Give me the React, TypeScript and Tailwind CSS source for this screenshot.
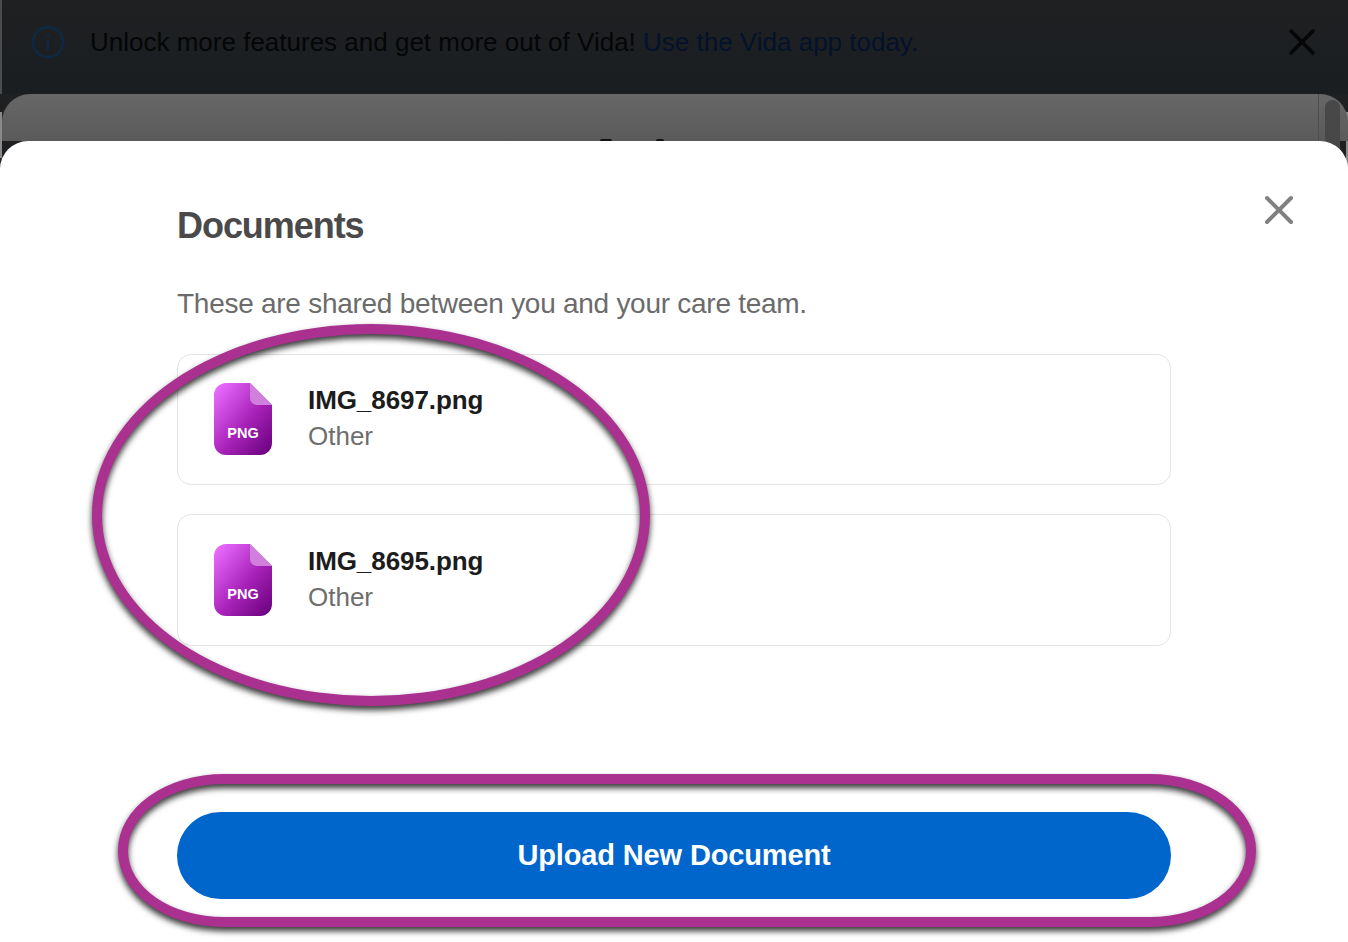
import { X } from "lucide-react";

const FONT = "font-['Liberation_Sans',Arial,sans-serif]";

const documents = [
  { name: "IMG_8697.png", kind: "Other", card: "h-[131px] pb-[1px]" },
  { name: "IMG_8695.png", kind: "Other", card: "h-[132px]" },
];

function PngIcon({ id }: { id: string }) {
  return (
    <svg width="58" height="72" viewBox="0 0 58 72" className="shrink-0">
      <defs>
        <linearGradient id={id} x1="0" y1="0" x2="1" y2="1">
          <stop offset="0.05" stopColor="#e96cff" />
          <stop offset="0.55" stopColor="#a822b8" />
          <stop offset="1" stopColor="#66007a" />
        </linearGradient>
      </defs>
      <path
        d="M12 0H36L58 22V60A12 12 0 0 1 46 72H12A12 12 0 0 1 0 60V12A12 12 0 0 1 12 0Z"
        fill={`url(#${id})`}
      />
      <path d="M36 0L58 22H43A7 7 0 0 1 36 15Z" fill="#d17fdc" />
      <text x="29" y="55" textAnchor="middle" fontFamily="Liberation Sans, Arial, sans-serif" fontWeight="700" fontSize="14.5" fill="#fff">
        PNG
      </text>
    </svg>
  );
}

function InfoIcon() {
  return (
    <svg width="34" height="34" viewBox="0 0 34 34" fill="none" className="shrink-0">
      <circle cx="17" cy="17" r="15" stroke="#0c2a45" strokeWidth="2.4" />
      <circle cx="17" cy="10.5" r="1.6" fill="#0c2a45" />
      <path d="M17 15V25" stroke="#0c2a45" strokeWidth="2.6" />
    </svg>
  );
}

export default function App() {
  return (
    <div className={`relative h-[942px] w-[1348px] overflow-hidden bg-[#1f2022] ${FONT}`}>
      {/* Banner, dimmed by the modal */}
      <div className="flex h-[94px] items-center border-l-2 border-[#4c4c4c] bg-gradient-to-b from-[#1f2022] to-[#1a1e21] pb-[10px] pl-[29px] pr-[24px]">
        <InfoIcon />
        <p className="ml-[25px] flex-1 text-[26px] text-[#050607]">
          Unlock more features and get more out of Vida! <span className="text-[#04122b]">Use the Vida app today.</span>
        </p>
        <X className="h-[44px] w-[44px] text-[#050607]" strokeWidth={1.9} />
      </div>

      {/* Slivers of the page at the window edges */}
      <div className="absolute left-0 top-[112px] h-[46px] w-[2px] bg-[#8a8a8a]" />
      <div className="absolute right-0 top-[112px] h-[60px] w-[2px] bg-[#8a8a8a]" />

      {/* Sheet behind */}
      <div className="relative ml-[2px] h-[848px] rounded-t-[28px] bg-gradient-to-b from-[#676767] to-[#5a5a5a] bg-[length:100%_47px] bg-no-repeat pt-[47px]">
        <div className="absolute right-[29px] top-0 h-[47px] w-[1px] bg-[#4e4e4e]" />
        <div className="absolute right-[8px] top-[6px] h-[60px] w-[15px] rounded-t-full bg-[#484848]" />
        <div className="absolute left-[598px] top-[45px] h-[2px] w-[12px] rounded-t-full bg-[#111]" />
        <div className="absolute left-[654px] top-[45px] h-[2px] w-[8px] rounded-t-full bg-[#111]" />

        {/* Modal */}
        <div className="relative -ml-[2px] h-[801px] w-[1348px] rounded-t-[28px] bg-white pl-[177px] pr-[177px]">
          <X className="absolute right-[45px] top-[45px] h-[48px] w-[48px] text-[#808080]" strokeWidth={2} />

          <h1 className="pt-[63px] text-[36px] font-bold leading-[44px] tracking-[-1.05px] text-[#4a4a4a]">Documents</h1>
          <p className="mt-[38px] text-[28px] leading-[36px] tracking-[-0.27px] text-[#6b6b6b]">
            These are shared between you and your care team.
          </p>

          <div className="mt-[32px] flex w-[994px] flex-col gap-[29px]">
            {documents.map((doc, i) => (
              <div key={doc.name} className={`flex items-center rounded-[14px] border border-[#e4e4e4] pl-[36px] ${doc.card}`}>
                <PngIcon id={`png-${i}`} />
                <div className="mb-[2px] ml-[36px]">
                  <div className="text-[26px] font-bold leading-[36px] tracking-[-0.08px] text-[#1c1c1c]">{doc.name}</div>
                  <div className="text-[26px] leading-[36px] text-[#6e6e6e]">{doc.kind}</div>
                </div>
              </div>
            ))}
          </div>

          <button className="mt-[166px] h-[87px] w-[994px] rounded-full bg-[#0066cc] text-[29px] font-bold tracking-[-0.15px] text-white">
            Upload New Document
          </button>

          {/* Annotations drawn over the shot */}
          <div className="absolute left-[92px] top-[183px] h-[382px] w-[558px] rounded-[50%] border-[10px] border-[#ab3191] drop-shadow-[0_4px_3px_rgba(0,0,0,0.8)]" />
          <div className="absolute left-[118px] top-[633px] h-[153px] w-[1138px] rounded-[106px/76px] border-[10px] border-[#ab3191] drop-shadow-[0_4px_3px_rgba(0,0,0,0.8)]" />
        </div>
      </div>
    </div>
  );
}
